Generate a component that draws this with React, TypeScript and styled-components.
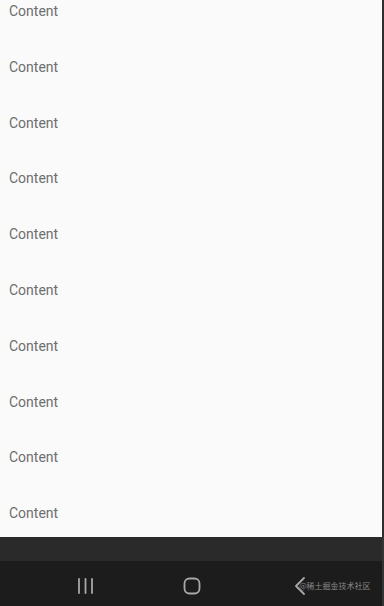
import React from "react";
import styled, { createGlobalStyle } from "styled-components";

const Global = createGlobalStyle`
  html, body { margin: 0; padding: 0; background: #2a2a2a; }
  body { font-family: Roboto, "Noto Sans", sans-serif; }
`;

const Screen = styled.div`
  width: 384px;
  height: 606px;
  display: flex;
  flex-direction: column;
  overflow: hidden;
  background: #2c2c2c;
`;

const Main = styled.div`
  display: flex;
  height: 537px;
`;

const List = styled.div`
  flex: 1;
  background: #fafafa;
  display: flex;
  flex-direction: column;
  overflow: hidden;
`;

const EdgeStrip = styled.div<{ $shade: string }>`
  width: 2px;
  background: ${(p) => p.$shade};
`;

const Row = styled.div`
  flex: 0 0 55.8px;
  padding: 2px 0 0 9px;
  box-sizing: border-box;
  font-size: 14px;
  line-height: 18px;
  color: #6e6e6e;
`;

const Band = styled.div`
  height: 24px;
  display: flex;
  background: #2a2a2a;
`;

const BandFill = styled.div`
  flex: 1;
`;

const NavBar = styled.div`
  height: 45px;
  display: flex;
  background: #1c1c1c;
`;

const NavInner = styled.div`
  flex: 1;
  position: relative;
  display: grid;
  grid-template-columns: 170px 45px 1fr;
  align-items: center;
  padding-top: 5px;
  box-sizing: border-box;
`;

const NavButton = styled.div<{ $pad: number }>`
  display: flex;
  align-items: center;
  padding-left: ${(p) => p.$pad}px;
`;

const Watermark = styled.span`
  position: absolute;
  left: 299px;
  top: 20px;
  font-family: "Noto Sans CJK SC", sans-serif;
  font-size: 8px;
  line-height: 10px;
  color: #8a8a8a;
  white-space: nowrap;
`;

export default function App() {
  const rows = Array.from({ length: 10 }, (_, i) => i);
  return (
    <>
      <Global />
      <Screen>
        <Main>
          <List>
            {rows.map((i) => (
              <Row key={i}>Content</Row>
            ))}
          </List>
          <EdgeStrip $shade="#2e2e2e" />
        </Main>
        <Band>
          <BandFill />
          <EdgeStrip $shade="#353535" />
        </Band>
        <NavBar>
          <NavInner>
            <NavButton $pad={77}>
              <svg width="18" height="18" viewBox="0 0 18 18">
                <g stroke="#a8a8a8" strokeWidth="1.8" strokeLinecap="round">
                  <line x1="2" y1="2" x2="2" y2="16" />
                  <line x1="8.5" y1="2" x2="8.5" y2="16" />
                  <line x1="15" y1="2" x2="15" y2="16" />
                </g>
              </svg>
            </NavButton>
            <NavButton $pad={13}>
              <svg width="18" height="18" viewBox="0 0 18 18">
                <rect x="1.5" y="1.5" width="15" height="15" rx="5" fill="none" stroke="#a8a8a8" strokeWidth="1.8" />
              </svg>
            </NavButton>
            <NavButton $pad={79}>
              <svg width="12" height="20" viewBox="0 0 12 20">
                <polyline points="10,2 2,10 10,18" fill="none" stroke="#a8a8a8" strokeWidth="1.8" strokeLinecap="round" strokeLinejoin="round" />
              </svg>
            </NavButton>
            <Watermark>@稀土掘金技术社区</Watermark>
          </NavInner>
          <EdgeStrip $shade="#333333" />
        </NavBar>
      </Screen>
    </>
  );
}
